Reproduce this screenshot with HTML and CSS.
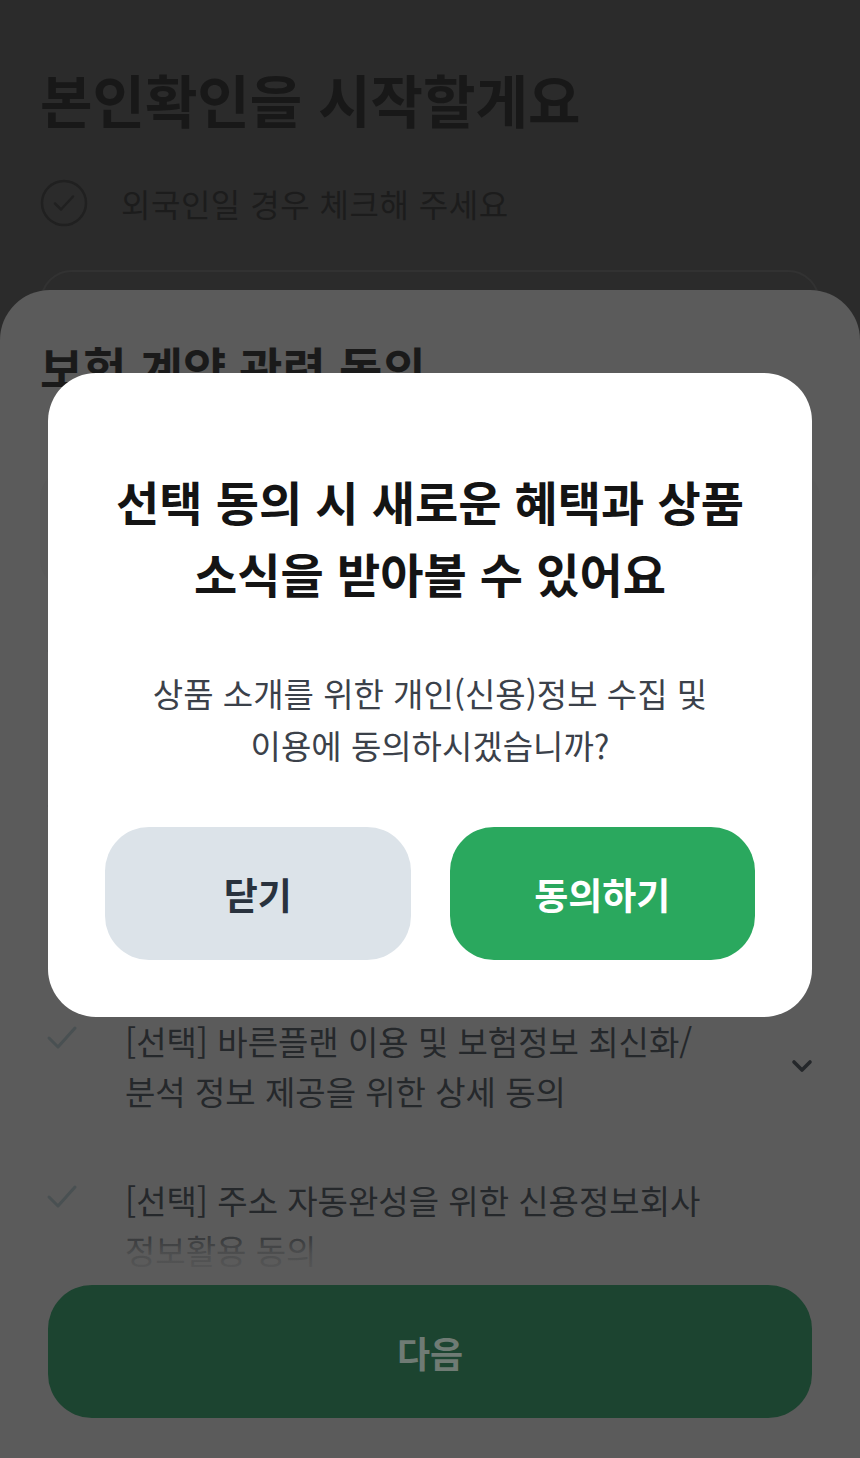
FILE: index.html
```html
<!DOCTYPE html>
<html lang="ko">
<head>
<meta charset="utf-8">
<title>본인확인</title>
<link rel="stylesheet" href="styles.css">
</head>
<body>
<main class="page">
  <h1 class="page-title">본인확인을 시작할게요</h1>
  <label class="foreign-check">
    <span class="circle-check">
      <svg viewBox="0 0 48 48" width="48" height="48"><circle cx="24" cy="24" r="22" fill="none" stroke="currentColor" stroke-width="2.5"/><path d="M15 24.5l6 6 12-13" fill="none" stroke="currentColor" stroke-width="2.5" stroke-linecap="round" stroke-linejoin="round"/></svg>
    </span>
    <span class="foreign-text">외국인일 경우 체크해 주세요</span>
  </label>
  <div class="input-box"></div>
</main>

<section class="sheet">
  <h2 class="sheet-title">보험 계약 관련 동의</h2>
  <div class="all-agree"></div>
  <ul class="agree-list">
    <li class="agree-item item-a">
      <svg class="check" viewBox="0 0 32 28" width="32" height="28"><path d="M3 14l9 9L29 4" fill="none" stroke="currentColor" stroke-width="3" stroke-linecap="round" stroke-linejoin="round"/></svg>
      <div class="agree-text">[필수] 보험계약 체결을 위한 개인(신용)정보 처리 동의</div>
      <svg class="chev" viewBox="0 0 22 14" width="22" height="14"><path d="M3 3l8 8 8-8" fill="none" stroke="currentColor" stroke-width="3.6" stroke-linecap="round" stroke-linejoin="round"/></svg>
    </li>
    <li class="agree-item item-b">
      <svg class="check" viewBox="0 0 32 28" width="32" height="28"><path d="M3 14l9 9L29 4" fill="none" stroke="currentColor" stroke-width="3" stroke-linecap="round" stroke-linejoin="round"/></svg>
      <div class="agree-text">[선택] 상품 소개를 위한 개인(신용)정보 수집 및 이용 동의</div>
      <svg class="chev" viewBox="0 0 22 14" width="22" height="14"><path d="M3 3l8 8 8-8" fill="none" stroke="currentColor" stroke-width="3.6" stroke-linecap="round" stroke-linejoin="round"/></svg>
    </li>
    <li class="agree-item item-c">
      <svg class="check" viewBox="0 0 32 28" width="32" height="28"><path d="M3 14l9 9L29 4" fill="none" stroke="currentColor" stroke-width="3" stroke-linecap="round" stroke-linejoin="round"/></svg>
      <div class="agree-text">[선택] 바른플랜 이용 및 보험정보 최신화/<br>분석 정보 제공을 위한 상세 동의</div>
      <svg class="chev" viewBox="0 0 22 14" width="22" height="14"><path d="M3 3l8 8 8-8" fill="none" stroke="currentColor" stroke-width="3.6" stroke-linecap="round" stroke-linejoin="round"/></svg>
    </li>
    <li class="agree-item item-d">
      <svg class="check" viewBox="0 0 32 28" width="32" height="28"><path d="M3 14l9 9L29 4" fill="none" stroke="currentColor" stroke-width="3" stroke-linecap="round" stroke-linejoin="round"/></svg>
      <div class="agree-text">[선택] 주소 자동완성을 위한 신용정보회사<br>정보활용 동의</div>
    </li>
  </ul>
  <div class="sheet-footer">
    <button class="next-btn" type="button">다음</button>
  </div>
</section>

<div class="dialog-layer">
  <div class="dialog" role="dialog">
    <h3 class="dialog-title">선택 동의 시 새로운 혜택과 상품<br>소식을 받아볼 수 있어요</h3>
    <p class="dialog-body">상품 소개를 위한 개인(신용)정보 수집 및<br>이용에 동의하시겠습니까?</p>
    <div class="dialog-actions">
      <button class="btn btn-close" type="button">닫기</button>
      <button class="btn btn-agree" type="button">동의하기</button>
    </div>
  </div>
</div>
</body>
</html>
```

FILE: styles.css
```css
* { box-sizing: border-box; }

html, body {
  margin: 0;
  padding: 0;
}

body {
  width: 860px;
  height: 1458px;
  overflow: hidden;
  position: relative;
  background: #2b2b2b;
  font-family: "Noto Sans CJK KR", "Noto Sans", sans-serif;
}

/* ---------- background page ---------- */
.page {
  padding: 60px 40px 0;
}

.page-title {
  margin: 0;
  font-size: 57px;
  line-height: 76px;
  font-weight: 700;
  letter-spacing: 0;
  color: #181818;
}

.foreign-check {
  display: flex;
  align-items: center;
  gap: 33px;
  margin-top: 43px;
}

.circle-check {
  display: flex;
  color: #202020;
}

.foreign-text {
  font-size: 32px;
  letter-spacing: 0.5px;
  color: #1c1c1c;
}

.input-box {
  margin-top: 43px;
  height: 130px;
  border: 2px solid #323232;
  border-radius: 32px;
}

/* ---------- bottom sheet ---------- */
.sheet {
  position: absolute;
  left: 0;
  right: 0;
  top: 290px;
  bottom: 0;
  background: #5b5b5b;
  border-radius: 50px 50px 0 0;
  padding: 45px 40px 0;
}

.sheet-title {
  margin: 0;
  font-size: 47px;
  line-height: 64px;
  font-weight: 700;
  letter-spacing: 0;
  color: #1a1a1a;
}

.all-agree {
  margin-top: 70px;
  height: 120px;
  border-radius: 30px;
  background: #595959;
}

.agree-list {
  list-style: none;
  margin: 0;
  padding: 0;
}

.agree-item {
  display: flex;
  align-items: center;
  padding-left: 6px;
}

.item-a { margin-top: 40px; }
.item-b { margin-top: 55px; }
.item-c { margin-top: 132px; }
.item-d { margin-top: 59px; }

.check {
  flex: none;
  align-self: flex-start;
  margin-top: 8px;
  color: #495052;
}

.agree-text {
  flex: 1;
  margin-left: 47px;
  font-size: 33px;
  line-height: 50px;
  letter-spacing: 0;
  color: #25282b;
}

.chev {
  flex: none;
  margin-left: 20px;
  margin-right: 7px;
  color: #24272a;
}

.sheet-footer {
  position: absolute;
  left: 0;
  right: 0;
  bottom: 0;
  padding: 0 48px 40px;
  background: #5b5b5b;
}

.sheet-footer::before {
  content: "";
  position: absolute;
  left: 0;
  right: 0;
  top: -62px;
  height: 62px;
  background: linear-gradient(to bottom, rgba(91, 91, 91, 0), rgba(91, 91, 91, 0.75) 50%, #5b5b5b 95%);
}

.next-btn {
  display: block;
  width: 100%;
  height: 133px;
  border: 0;
  border-radius: 44px;
  background: #1c4430;
  color: #6f7b74;
  font-family: inherit;
  font-size: 36px;
  font-weight: 700;
}

/* ---------- dialog ---------- */
.dialog-layer {
  position: absolute;
  inset: 0;
  display: flex;
  justify-content: center;
  align-items: flex-start;
  padding-top: 373px;
}

.dialog {
  width: 764px;
  height: 644px;
  background: #ffffff;
  border-radius: 48px;
  padding: 92px 57px 57px;
  text-align: center;
}

.dialog-title {
  margin: 0;
  font-size: 47px;
  line-height: 72px;
  font-weight: 700;
  letter-spacing: 0;
  color: #141414;
}

.dialog-body {
  margin: 58px 0 0;
  font-size: 33px;
  line-height: 52px;
  letter-spacing: 0;
  color: #3b414a;
}

.dialog-actions {
  display: flex;
  gap: 39px;
  margin-top: 56px;
}

.btn {
  flex: 1;
  height: 133px;
  border: 0;
  border-radius: 44px;
  font-family: inherit;
  font-size: 37px;
  font-weight: 700;
}

.btn-close {
  background: #dce3e9;
  color: #29323e;
}

.btn-agree {
  background: #2aa85e;
  color: #ffffff;
}
```
